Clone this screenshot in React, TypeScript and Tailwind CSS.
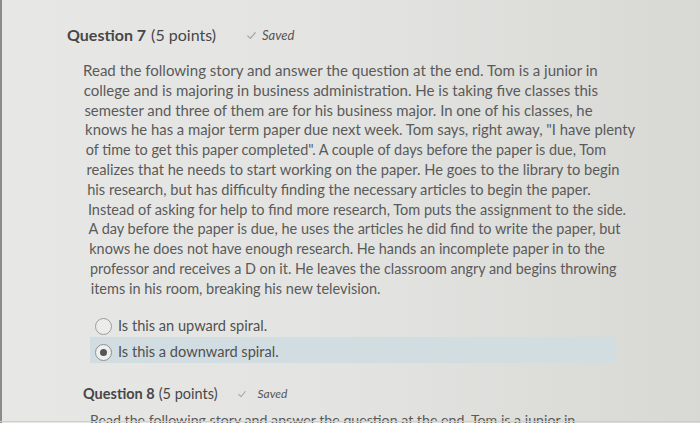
import React from "react";

const lines: [string, number][] = [
  ["Read the following story and answer the question at the end. Tom is a junior in", 15.05],
  ["college and is majoring in business administration. He is taking five classes this", 15.05],
  ["semester and three of them are for his business major. In one of his classes, he", 14.9],
  ['knows he has a major term paper due next week. Tom says, right away, "I have plenty', 14.85],
  ['of time to get this paper completed". A couple of days before the paper is due, Tom', 14.45],
  ["realizes that he needs to start working on the paper. He goes to the library to begin", 14.7],
  ["his research, but has difficulty finding the necessary articles to begin the paper.", 14.65],
  ["Instead of asking for help to find more research, Tom puts the assignment to the side.", 14.5],
  ["A day before the paper is due, he uses the articles he did find to write the paper, but", 14.5],
  ["knows he does not have enough research. He hands an incomplete paper in to the", 14.4],
  ["professor and receives a D on it. He leaves the classroom angry and begins throwing", 14.35],
  ["items in his room, breaking his new television.", 14.5],
];

function Check({ className }: { className?: string }) {
  return (
    <svg viewBox="0 0 12 12" className={className} fill="none">
      <path d="M2 6.5 L4.8 9.2 L10 3" stroke="#a3a8ab" strokeWidth="1.3" strokeLinecap="round" strokeLinejoin="round" />
    </svg>
  );
}

export default function App() {
  return (
    <div
      className="w-[700px] h-[423px] overflow-hidden relative bg-gradient-to-r from-[#e7e8e6] via-[#e3e4e1] to-[#d8d8d4] text-[#555]"
      style={{ fontFamily: "Lato, 'Open Sans', sans-serif" }}
    >
      <div className="absolute left-0 top-0 h-full w-[2px] bg-[#8a8c8c]" />
      <div className="pl-[67px] pt-[25px]">
        <div className="flex items-center text-[16px] text-[#474747] leading-[20px]">
          <span className="font-bold">Question 7</span>
          <span className="ml-[5px]">(5 points)</span>
          <Check className="w-[11px] h-[11px] ml-[30px]" />
          <span className="ml-[5px] italic text-[13px] text-[#555]">Saved</span>
        </div>
        <div className="pl-[16px] pt-[16px] leading-[19.8px] text-[#5a5a5a]">
          {lines.map(([l, s], i) => (
            <div key={i} className="whitespace-nowrap" style={{ marginLeft: i * 0.7, fontSize: s }}>
              {l}
            </div>
          ))}
        </div>
        <div className="mt-[17px] ml-[23px] w-[525px] text-[14.6px] text-[#505050]">
          <div className="flex items-center h-[21px] pl-[5px]">
            <span className="w-[17px] h-[17px] rounded-full border border-[#9a9c9c] bg-[#ecedeb]" />
            <span className="ml-[6px]">Is this an upward spiral.</span>
          </div>
          <div className="flex items-center h-[26px] pl-[5px] pt-[5px] bg-[#d2dde2]">
            <span className="w-[17px] h-[17px] rounded-full border-[1.5px] border-[#8d9090] bg-[#eef0ef] flex items-center justify-center">
              <span className="w-[7px] h-[7px] rounded-full bg-[#555]" />
            </span>
            <span className="ml-[6px]">Is this a downward spiral.</span>
          </div>
        </div>
        <div className="mt-[22px] ml-[16px] flex items-center text-[14.5px] text-[#474747] leading-[18px]">
          <span className="font-bold">Question 8</span>
          <span className="ml-[4px]">(5 points)</span>
          <Check className="w-[10px] h-[10px] ml-[19px]" />
          <span className="ml-[11px] italic text-[12px] text-[#555]">Saved</span>
        </div>
        <div className="mt-[8px] ml-[23px] whitespace-nowrap text-[14.2px] leading-[18px] text-[#595959]">
          Read the following story and answer the question at the end. Tom is a junior in
        </div>
      </div>
      <div className="absolute left-0 bottom-[1px] w-full h-px bg-[#cfd0ce]" />
    </div>
  );
}
